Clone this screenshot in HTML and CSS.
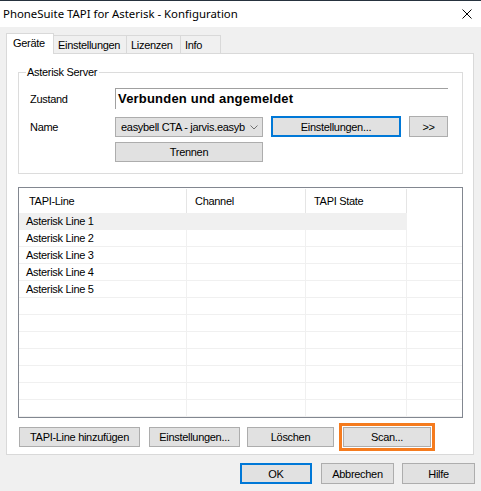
FILE: index.html
```html
<!DOCTYPE html>
<html lang="de">
<head>
<meta charset="utf-8">
<title>PhoneSuite TAPI for Asterisk - Konfiguration</title>
<link rel="stylesheet" href="styles.css">
</head>
<body>
<div class="window">
  <div class="titlebar">
    <span class="title">PhoneSuite TAPI for Asterisk - Konfiguration</span>
    <svg class="close" width="10" height="10" viewBox="0 0 10 10"><path d="M0.5 0.5 L9.5 9.5 M9.5 0.5 L0.5 9.5" stroke="#000" stroke-width="1" fill="none"/></svg>
  </div>
  <div class="main">
    <div class="tabs">
      <div class="tab active">Geräte</div>
      <div class="tab tab-einst">Einstellungen</div>
      <div class="tab tab-liz">Lizenzen</div>
      <div class="tab tab-info">Info</div>
    </div>
    <div class="panel">
      <div class="group">
        <span class="legend">Asterisk Server</span>
        <div class="row status-row">
          <span class="label">Zustand</span>
          <div class="status">Verbunden und angemeldet</div>
        </div>
        <div class="row name-row">
          <span class="label">Name</span>
          <div class="combo">
            <span class="combo-text">easybell CTA - jarvis.easyb</span>
            <svg class="chev" width="8" height="5" viewBox="0 0 8 5"><path d="M0.5 0.5 L4 4 L7.5 0.5" stroke="#707070" stroke-width="1" fill="none"/></svg>
          </div>
          <button class="btn btn-focus btn-einst">Einstellungen...</button>
          <button class="btn btn-more">&gt;&gt;</button>
        </div>
        <div class="row trennen-row">
          <span class="label"></span>
          <button class="btn btn-trennen">Trennen</button>
        </div>
      </div>
      <div class="list">
        <div class="list-head">
          <div class="hcell">TAPI-Line</div>
          <div class="hcell">Channel</div>
          <div class="hcell">TAPI State</div>
          <div class="hcell hlast"></div>
        </div>
        <div class="list-body">
          <div class="lrow sel"><div class="cell">Asterisk Line 1</div><div class="cell"></div><div class="cell"></div><div class="cell clast"></div></div>
          <div class="lrow"><div class="cell">Asterisk Line 2</div><div class="cell"></div><div class="cell"></div><div class="cell clast"></div></div>
          <div class="lrow"><div class="cell">Asterisk Line 3</div><div class="cell"></div><div class="cell"></div><div class="cell clast"></div></div>
          <div class="lrow"><div class="cell">Asterisk Line 4</div><div class="cell"></div><div class="cell"></div><div class="cell clast"></div></div>
          <div class="lrow"><div class="cell">Asterisk Line 5</div><div class="cell"></div><div class="cell"></div><div class="cell clast"></div></div>
          <div class="lrow"><div class="cell"></div><div class="cell"></div><div class="cell"></div><div class="cell clast"></div></div>
          <div class="lrow"><div class="cell"></div><div class="cell"></div><div class="cell"></div><div class="cell clast"></div></div>
          <div class="lrow"><div class="cell"></div><div class="cell"></div><div class="cell"></div><div class="cell clast"></div></div>
          <div class="lrow"><div class="cell"></div><div class="cell"></div><div class="cell"></div><div class="cell clast"></div></div>
          <div class="lrow"><div class="cell"></div><div class="cell"></div><div class="cell"></div><div class="cell clast"></div></div>
          <div class="lrow"><div class="cell"></div><div class="cell"></div><div class="cell"></div><div class="cell clast"></div></div>
          <div class="lrow"><div class="cell"></div><div class="cell"></div><div class="cell"></div><div class="cell clast"></div></div>
        </div>
      </div>
      <div class="actions">
        <button class="btn btn-add">TAPI-Line hinzufügen</button>
        <button class="btn btn-lset">Einstellungen...</button>
        <button class="btn btn-del">Löschen</button>
        <button class="btn btn-scan">Scan...</button>
      </div>
    </div>
    <div class="footer">
      <button class="btn btn-focus btn-ok">OK</button>
      <button class="btn btn-cancel">Abbrechen</button>
      <button class="btn btn-help">Hilfe</button>
    </div>
  </div>
</div>
</body>
</html>
```
FILE: styles.css
```css
* { box-sizing: border-box; }
html, body { margin: 0; padding: 0; }
body {
  background: #f0f0f0;
  width: 481px;
  height: 491px;
  overflow: hidden;
  font-family: "Liberation Sans", Arial, sans-serif;
  font-size: 11px;
  letter-spacing: -0.3px;
  color: #000;
}
.window { width: 481px; height: 491px; }

.titlebar {
  height: 27px;
  border-top: 1px solid #26323e;
  background: #fff;
  display: flex;
  align-items: center;
  justify-content: space-between;
  padding: 0 9px 0 3px;
}
.title {
  font-family: "Noto Sans", "Liberation Sans", sans-serif;
  font-size: 11.4px;
  letter-spacing: 0;
  color: #000;
  padding-bottom: 1px;
}
.close { display: block; margin-top: 0; }

.main { padding: 6px 7px 0 6px; }

.tabs {
  display: flex;
  align-items: flex-end;
  height: 20px;
  position: relative;
  z-index: 1;
}
.tab {
  height: 18px;
  border: 1px solid #d9d9d9;
  border-left: none;
  border-bottom: none;
  background: #f0f0f0;
  display: flex;
  align-items: center;
  padding-left: 4px;
}
.tab.active {
  height: 21px;
  margin-bottom: -1px;
  background: #fff;
  border-left: 1px solid #d9d9d9;
  width: 48px;
  padding-left: 6px;
  padding-bottom: 2px;
}
.tab-einst { width: 73px; }
.tab-liz { width: 54px; }
.tab-info { width: 40px; }

.panel {
  background: #fff;
  border: 1px solid #d9d9d9;
  height: 402px;
  padding: 18px 10px 0 11px;
}

.group {
  position: relative;
  border: 1px solid #dcdcdc;
  height: 102px;
  padding: 15px 0 0 11px;
}
.legend {
  position: absolute;
  top: -7px;
  left: 7px;
  background: #fff;
  padding: 0 2px 0 1px;
  line-height: 13px;
}
.row { display: flex; align-items: center; }
.label { width: 85px; flex: none; }
.status {
  width: 333px;
  height: 21px;
  border-top: 1px solid #a0a0a0;
  border-left: 1px solid #a0a0a0;
  padding: 0 0 0 2px;
  font-weight: bold;
  font-size: 13px;
  letter-spacing: 0.2px;
  line-height: 19px;
  white-space: nowrap;
  overflow: hidden;
}
.name-row { margin-top: 7px; height: 21px; }
.combo {
  width: 148px;
  height: 20px;
  margin-top: 1px;
  background: #e1e1e1;
  border: 1px solid #adadad;
  display: flex;
  align-items: center;
  padding: 0 4px 0 5px;
  overflow: hidden;
}
.combo-text {
  flex: 1;
  white-space: nowrap;
}
.chev { flex: none; margin-left: 3px; }

.btn {
  font-family: "Liberation Sans", Arial, sans-serif;
  font-size: 11px;
  letter-spacing: -0.3px;
  color: #000;
  background: #e1e1e1;
  border: 1px solid #adadad;
  padding: 0;
  margin: 0;
  height: 20px;
  display: flex;
  align-items: center;
  justify-content: center;
  flex: none;
}
.btn-focus { border: 2px solid #0078d7; }
.btn-einst { width: 130px; height: 21px; margin-left: 8px; }
.btn-more { width: 39px; height: 21px; margin-left: 8px; }
.trennen-row { margin-top: 5px; }
.btn-trennen { width: 148px; }

.list {
  margin-top: 13px;
  border: 1px solid #828790;
  height: 231px;
  overflow: hidden;
}
.list-head, .lrow {
  display: grid;
  grid-template-columns: 168px 119px 101px 1fr;
}
.list-head { height: 25px; }
.hcell {
  border-right: 1px solid #e5e5e5;
  padding-left: 10px;
  display: flex;
  align-items: center;
  margin-top: 1px;
}
.hcell + .hcell { padding-left: 8px; }
.hcell.hlast { border-right: none; }
.list-body { height: 204px; overflow: hidden; }
.lrow { height: 17px; }
.cell {
  border-right: 1px solid #f0f0f0;
  border-bottom: 1px solid #f0f0f0;
  padding-left: 7px;
  line-height: 16px;
  white-space: nowrap;
}
.cell.clast { border-right: none; }
.lrow.sel .cell { background: #f0f0f0; }
.lrow.sel .cell.clast { background: #fff; border-bottom-color: #fff; }

.actions {
  display: flex;
  margin-top: 9px;
  padding-left: 1px;
}
.btn-add { width: 121px; }
.btn-lset { width: 91px; margin-left: 9px; }
.btn-del { width: 87px; margin-left: 7px; }
.btn-scan {
  width: 88px;
  margin-left: 9px;
  outline: 3px solid #f57b1e;
  outline-offset: 1px;
}

.footer {
  display: flex;
  justify-content: flex-end;
  margin-top: 8px;
  margin-right: -1px;
}
.footer .btn { height: 21px; }
.btn-ok { width: 72px; }
.btn-cancel { width: 73px; margin-left: 9px; }
.btn-help { width: 73px; margin-left: 8px; }
```
